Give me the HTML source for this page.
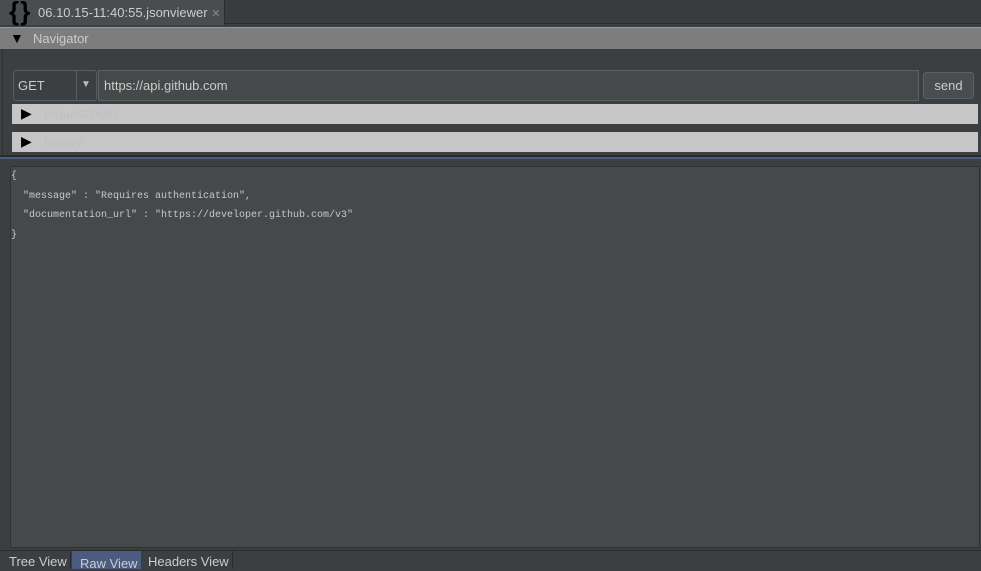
<!DOCTYPE html>
<html><head><style>
*{margin:0;padding:0;box-sizing:border-box}
body{width:981px;height:569px;background:#3c3f41;font-family:"Liberation Sans",sans-serif;position:relative;overflow:hidden;color:#bbb}
.a{position:absolute}
</style></head><body>
<div class="a" style="left:0;top:0;width:981px;height:24px;background:#393b3d;border-bottom:1px solid #2b2b2b"></div>
<div class="a" style="left:0;top:0;width:225px;height:25px;background:#4a4d4f;border-right:1px solid #2b2b2b"></div>
<div class="a" style="left:9px;top:-4px;font:bold 26px 'Liberation Sans',sans-serif;color:#000;letter-spacing:1px">{}</div>
<div class="a" style="left:38px;top:5px;font-size:13px;color:#ccc">06.10.15-11:40:55.jsonviewer <span style="color:#888;font-size:11px">✕</span></div>
<div class="a" style="left:0;top:27px;width:981px;height:22px;background:#7d7d7d;border-top:1px solid #999"></div>
<div class="a" style="left:10px;top:30px;font-size:14px;color:#000">▼</div>
<div class="a" style="left:33px;top:31px;font-size:13px;color:#ccc">Navigator</div>
<div class="a" style="left:2px;top:49px;width:979px;height:106px;border-left:1px solid #2f3132"></div>
<div class="a" style="left:13px;top:70px;width:84px;height:31px;background:#3c3f41;border:1px solid #5a5d5f;border-radius:3px"></div>
<div class="a" style="left:76px;top:71px;width:1px;height:29px;background:#5a5d5f"></div>
<div class="a" style="left:18px;top:78px;font-size:13px;color:#ccc">GET</div>
<div class="a" style="left:81px;top:79px;font-size:10px;color:#bbb">▼</div>
<div class="a" style="left:98px;top:70px;width:821px;height:31px;background:#45494a;border:1px solid #5e6163"></div>
<div class="a" style="left:104px;top:78px;font-size:13px;color:#ccc">https://api.github.com</div>
<div class="a" style="left:923px;top:72px;width:51px;height:27px;background:#4a4d4f;border:1px solid #5e6163;border-radius:3px;font-size:13px;color:#ccc;text-align:center;line-height:25px">send</div>
<div class="a" style="left:12px;top:104px;width:966px;height:20px;background:#c6c6c6"></div>
<div class="a" style="left:21px;top:105px;font-size:14px;color:#000">▶</div>
<div class="a" style="left:44px;top:106px;font-size:13px;color:#c0c0c0">request body</div>
<div class="a" style="left:12px;top:132px;width:966px;height:20px;background:#c6c6c6"></div>
<div class="a" style="left:21px;top:133px;font-size:14px;color:#000">▶</div>
<div class="a" style="left:44px;top:134px;font-size:13px;color:#c0c0c0">history</div>
<div class="a" style="left:0;top:155px;width:981px;height:2px;background:#2b2b2b"></div>
<div class="a" style="left:0;top:157px;width:981px;height:2px;background:#4b5c82"></div>
<div class="a" style="left:10px;top:166px;width:970px;height:382px;background:#45494a;border:1px solid #2f3132"></div>
<pre class="a" style="left:11px;top:167px;font:10px/19.5px 'Liberation Mono',monospace;color:#c8c8c8">{
  "message" : "Requires authentication",
  "documentation_url" : "https://developer.github.com/v3"
}</pre>
<div class="a" style="left:0;top:550px;width:981px;height:19px;background:#3c3f41;border-top:1px solid #2b2b2b"></div>
<div class="a" style="left:3px;top:551px;width:68px;height:18px;border-right:1px solid #2b2b2b;font-size:13px;color:#ccc;padding:3px 0 0 6px">Tree View</div>
<div class="a" style="left:72px;top:551px;width:69px;height:18px;background:#4b5c80;font-size:13px;color:#ccc;padding:5px 0 0 8px">Raw View</div>
<div class="a" style="left:142px;top:551px;width:91px;height:18px;border-right:1px solid #2b2b2b;font-size:13px;color:#ccc;padding:3px 0 0 6px">Headers View</div>
</body></html>
